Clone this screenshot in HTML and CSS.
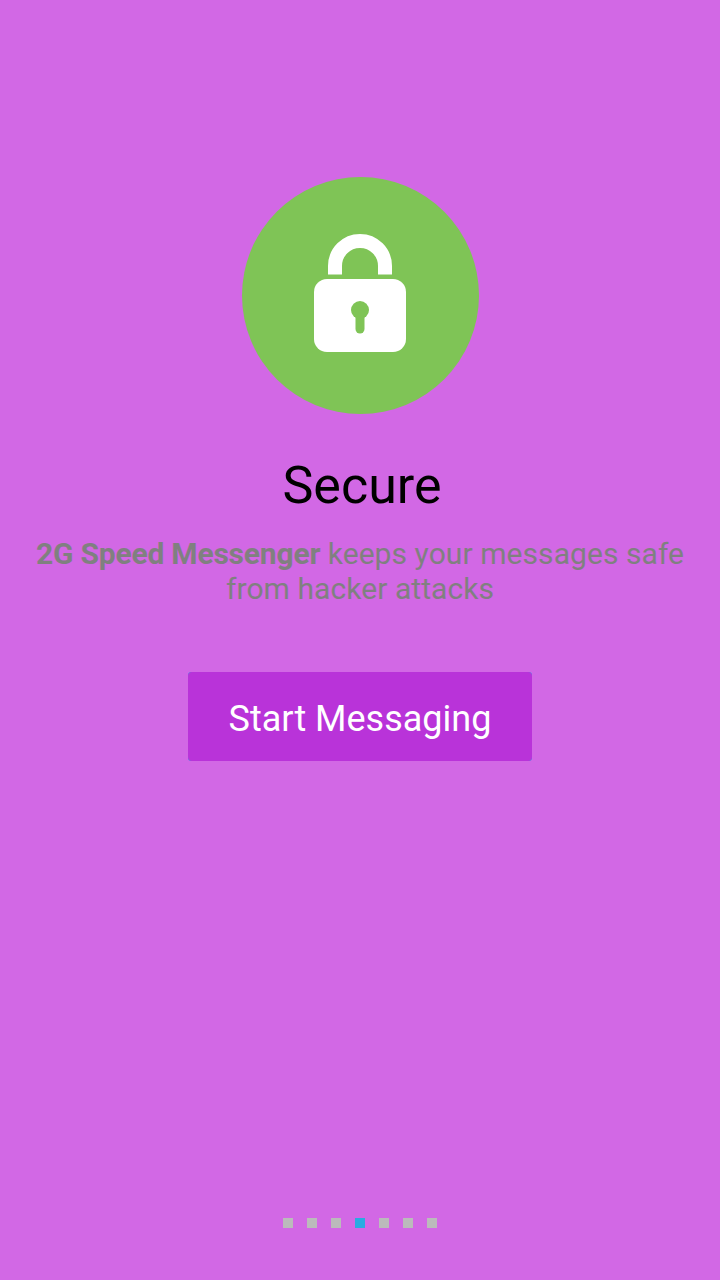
FILE: index.html
```html
<!DOCTYPE html>
<html lang="en">
<head>
    <meta charset="UTF-8">
    <meta name="viewport" content="width=device-width, initial-scale=1.0">
    <title>Secure</title>
    <link rel="stylesheet" href="styles.css">
</head>
<body>
    <div class="page">
        <div class="slide">
            <div class="icon-circle">
                <svg class="lock" width="92" height="118" viewBox="0 0 92 118">
                    <path d="M21 40.500V32A25 25 0 0 1 71 32V40.500" fill="none" stroke="#fff" stroke-width="14"/>
                    <path fill="#fff" d="M13 45H79A13 13 0 0 1 92 58V105A13 13 0 0 1 79 118H13A13 13 0 0 1 0 105V58A13 13 0 0 1 13 45Z"/>
                    <circle cx="46" cy="76" r="9" fill="#7fc456"/>
                    <path d="M46 78V95" stroke="#7fc456" stroke-width="9" stroke-linecap="round"/>
                </svg>
            </div>
            <h1 class="title">Secure</h1>
            <p class="desc"><b>2G Speed Messenger</b> keeps your messages safe from hacker attacks</p>
            <div class="button-frame">
                <button class="start-button">Start Messaging</button>
            </div>
        </div>
        <div class="dots">
            <span class="dot"></span>
            <span class="dot"></span>
            <span class="dot"></span>
            <span class="dot active"></span>
            <span class="dot"></span>
            <span class="dot"></span>
            <span class="dot"></span>
        </div>
    </div>
</body>
</html>
```

FILE: styles.css
```css
body {
    margin: 0;
    padding: 0;
    background-color: #d268e5;
    font-family: Roboto, sans-serif;
}
.page {
    height: 1280px;
    display: flex;
    flex-direction: column;
    justify-content: space-between;
    align-items: center;
}
.slide {
    display: flex;
    flex-direction: column;
    align-items: center;
    padding-top: 177px;
}
.icon-circle {
    width: 237px;
    height: 237px;
    border-radius: 50%;
    background-color: #7fc456;
    display: flex;
    align-items: center;
    justify-content: center;
}
.lock {
    margin-bottom: 5px;
}
.title {
    margin: 39px 0 0 0;
    padding-left: 4px;
    font-size: 52px;
    line-height: 66px;
    font-weight: 400;
    color: #000;
}
.desc {
    width: 680px;
    margin: 17px 0 0 0;
    font-size: 30px;
    line-height: 35px;
    letter-spacing: 0.07px;
    text-align: center;
    color: #808080;
}
.desc b {
    letter-spacing: -0.2px;
}
.button-frame {
    margin-top: 66px;
    border-radius: 3px;
    background-color: #4a90e2;
}
.start-button {
    display: block;
    padding: 5px 0 0 0;
    width: 344px;
    height: 89px;
    border: none;
    border-radius: 4px;
    background-color: #b933d9;
    color: #fff;
    font-family: Roboto, sans-serif;
    font-size: 36px;
}
.dots {
    display: flex;
    gap: 14px;
    margin-bottom: 52px;
}
.dot {
    width: 10px;
    height: 10px;
    background-color: #bbbbbb;
}
.dot.active {
    background-color: #29abe2;
}
```
